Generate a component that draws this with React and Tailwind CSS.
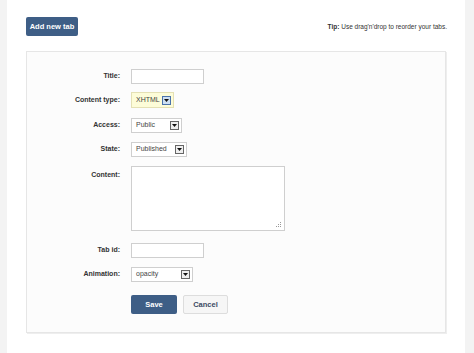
import React from "react";

function Arrow({ blue }) {
  return (
    <span
      className={
        "flex h-[9px] w-[9px] items-center justify-center border " +
        (blue ? "border-[#4a72ab] bg-[#cddff3]" : "border-[#666] bg-[#efefef]")
      }
    >
      <svg width="5" height="3" viewBox="0 0 5 3">
        <path d="M0 0h5L2.5 3z" fill="#111" />
      </svg>
    </span>
  );
}

function Select({ value, w, yellow }) {
  return (
    <div
      className={
        "flex items-center justify-between pl-[4px] pr-[2px] border text-[7px] text-[#444] " +
        (yellow
          ? "h-[16px] bg-[#fdfcd8] border-[#e4e0b4]"
          : "h-[15px] bg-white border-[#cfcfcf]")
      }
      style={{ width: w }}
    >
      <span>{value}</span>
      <Arrow blue={yellow} />
    </div>
  );
}

function Label({ children, top }) {
  return (
    <div
      className={
        "w-[93px] shrink-0 text-right text-[7px] font-bold text-[#333] " +
        (top ? "pt-[4px]" : "")
      }
    >
      {children}
    </div>
  );
}

export default function App() {
  return (
    <div
      className="flex h-[353px] w-[474px] bg-white"
      style={{ fontFamily: '"Liberation Sans", Arial, sans-serif' }}
    >
      <div className="w-[7px] shrink-0 bg-[#f3f3f3]" />
      <div className="flex-1 pl-[19px] pr-[19px]">
        <div className="flex items-center justify-between pt-[17px]">
          <button className="h-[19px] w-[52px] rounded-[2px] bg-[#3e5e86] text-[7.5px] font-bold text-white">
            Add new tab
          </button>
          <div className="text-[6.5px] text-[#333] -mr-[1px]">
            <span className="font-bold">Tip:</span> Use drag'n'drop to reorder your tabs.
          </div>
        </div>
        <div className="mt-[15px] h-[282px] border border-[#e6e6e6] bg-[#fcfcfc] pt-[17px] shadow-[1px_1px_0_#eeeeee]">
          <div className="flex items-center gap-[11px]">
            <Label>Title:</Label>
            <div className="h-[15px] w-[73px] border border-[#cfcfcf] bg-white" />
          </div>
          <div className="mt-[8px] flex items-center gap-[11px]">
            <Label>Content type:</Label>
            <Select value="XHTML" w="43px" yellow />
          </div>
          <div className="mt-[10px] flex items-center gap-[11px]">
            <Label>Access:</Label>
            <Select value="Public" w="51px" />
          </div>
          <div className="mt-[9px] flex items-center gap-[11px]">
            <Label>State:</Label>
            <Select value="Published" w="56px" />
          </div>
          <div className="mt-[9px] flex items-start gap-[11px]">
            <Label top>Content:</Label>
            <div className="relative h-[65px] w-[154px] border border-[#cfcfcf] bg-white">
              <svg
                className="absolute bottom-[2px] right-[2px]"
                width="6"
                height="6"
                viewBox="0 0 6 6"
              >
                <rect x="4" y="0" width="1" height="1" fill="#999" />
                <rect x="2" y="2" width="1" height="1" fill="#999" />
                <rect x="4" y="2" width="1" height="1" fill="#999" />
                <rect x="0" y="4" width="1" height="1" fill="#999" />
                <rect x="2" y="4" width="1" height="1" fill="#999" />
                <rect x="4" y="4" width="1" height="1" fill="#999" />
              </svg>
            </div>
          </div>
          <div className="mt-[12px] flex items-center gap-[11px]">
            <Label>Tab id:</Label>
            <div className="h-[15px] w-[73px] border border-[#cfcfcf] bg-white" />
          </div>
          <div className="mt-[9px] flex items-center gap-[11px]">
            <Label>Animation:</Label>
            <Select value="opacity" w="62px" />
          </div>
          <div className="mt-[13px] flex items-center gap-[6px] pl-[104px]">
            <button className="h-[19px] w-[46px] rounded-[2px] bg-[#3e5e86] text-[7.5px] font-bold text-white">
              Save
            </button>
            <button className="h-[19px] w-[45px] rounded-[2px] border border-[#dddddd] bg-[#f6f6f6] text-[7.5px] font-bold text-[#3b4a63]">
              Cancel
            </button>
          </div>
        </div>
      </div>
      <div className="w-[9px] shrink-0 bg-[#f3f3f3]" />
    </div>
  );
}
